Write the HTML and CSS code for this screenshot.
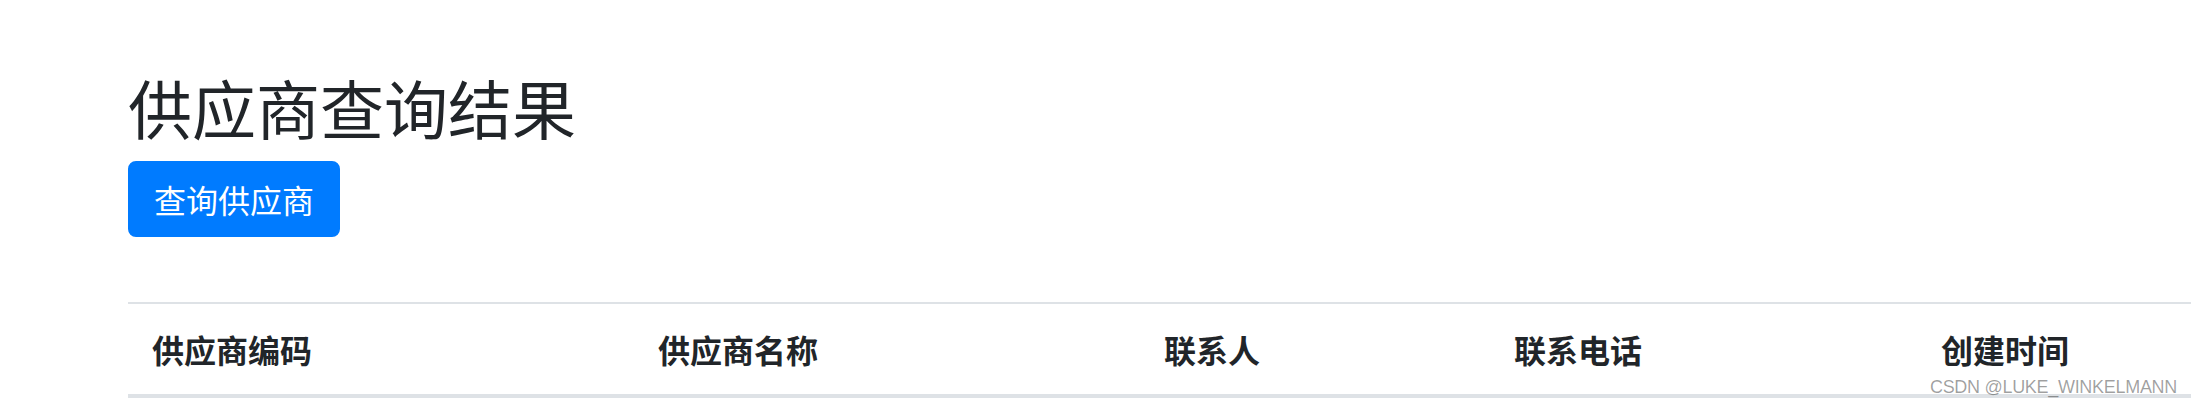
FILE: index.html
```html
<!DOCTYPE html>
<html lang="zh-CN">
<head>
<meta charset="utf-8">
<title>供应商查询结果</title>
<link rel="stylesheet" href="styles.css">
</head>
<body>
<div class="page">
  <h2 class="title">供应商查询结果</h2>
  <a class="btn" href="#">查询供应商</a>
  <div class="table-wrap">
    <table class="table">
      <thead>
        <tr>
          <th class="c1">供应商编码</th>
          <th class="c2">供应商名称</th>
          <th class="c3">联系人</th>
          <th class="c4">联系电话</th>
          <th class="c5">创建时间</th>
        </tr>
      </thead>
    </table>
  </div>
</div>
<div class="watermark">CSDN @LUKE_WINKELMANN</div>
</body>
</html>
```

FILE: styles.css
```css
html, body {
  margin: 0;
  padding: 0;
  overflow: hidden;
  background: #ffffff;
}
body {
  width: 2191px;
  height: 406px;
  position: relative;
  font-family: "Noto Sans CJK SC", "Noto Sans", sans-serif;
  color: #212529;
}
.page {
  padding: 68px 0 0 128px;
}
.title {
  margin: 0 0 16px 0;
  font-size: 64px;
  line-height: 77px;
  font-weight: 400;
  color: #212529;
}
.btn {
  display: inline-block;
  background: #007bff;
  border: 2px solid #007bff;
  color: #ffffff;
  font-size: 32px;
  line-height: 48px;
  padding: 12px 24px;
  border-radius: 8px;
  text-decoration: none;
  font-weight: 400;
}
.table-wrap {
  margin-top: 65px;
  overflow: hidden;
}
.table {
  width: 2216px;
  border-collapse: collapse;
  table-layout: fixed;
}
.table th {
  text-align: left;
  font-size: 32px;
  line-height: 48px;
  font-weight: 700;
  padding: 21px 24px;
  border-top: 2px solid #dee2e6;
  border-bottom: 4px solid #dee2e6;
  white-space: nowrap;
}
.c1 { width: 458px; }
.c2 { width: 458px; }
.c3 { width: 302px; }
.c4 { width: 379px; }
.c5 { width: 379px; }
.watermark {
  position: absolute;
  right: 14px;
  top: 376px;
  font-family: "Liberation Sans", Arial, sans-serif;
  font-size: 18px;
  line-height: 22px;
  color: rgba(0, 0, 0, 0.38);
  letter-spacing: -0.3px;
}
```
